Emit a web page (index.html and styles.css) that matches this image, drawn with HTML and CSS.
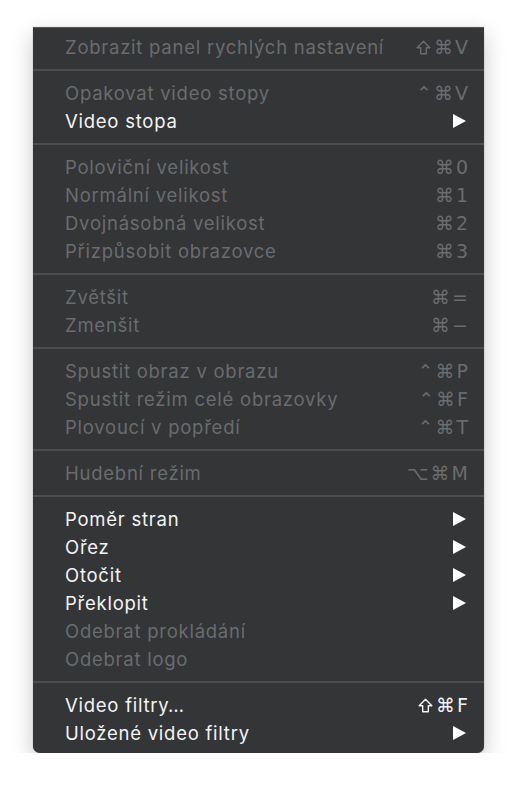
FILE: index.html
```html
<!DOCTYPE html>
<html>
<head>
<meta charset="utf-8">
<link rel="stylesheet" href="styles.css">
</head>
<body>
<div class="page">
  <div class="menu">
    <div class="item dis"><span class="label">Zobrazit panel rychlých nastavení</span><span class="key"><svg class="shift" viewBox="0 0 15 15"><path d="M7.5 1.2 L13.8 7.8 H10.3 V13.8 H4.7 V7.8 H1.2 Z"/></svg>⌘V</span></div>
    <div class="sep"></div>
    <div class="item dis"><span class="label">Opakovat video stopy</span><span class="key">⌃⌘V</span></div>
    <div class="item"><span class="label">Video stopa</span><span class="arrow"></span></div>
    <div class="sep"></div>
    <div class="item dis"><span class="label">Poloviční velikost</span><span class="key">⌘0</span></div>
    <div class="item dis"><span class="label">Normální velikost</span><span class="key">⌘1</span></div>
    <div class="item dis"><span class="label">Dvojnásobná velikost</span><span class="key">⌘2</span></div>
    <div class="item dis"><span class="label">Přizpůsobit obrazovce</span><span class="key">⌘3</span></div>
    <div class="sep"></div>
    <div class="item dis"><span class="label">Zvětšit</span><span class="key">⌘=</span></div>
    <div class="item dis"><span class="label">Zmenšit</span><span class="key">⌘−</span></div>
    <div class="sep"></div>
    <div class="item dis"><span class="label">Spustit obraz v obrazu</span><span class="key">⌃⌘P</span></div>
    <div class="item dis"><span class="label">Spustit režim celé obrazovky</span><span class="key">⌃⌘F</span></div>
    <div class="item dis"><span class="label">Plovoucí v popředí</span><span class="key">⌃⌘T</span></div>
    <div class="sep"></div>
    <div class="item dis"><span class="label">Hudební režim</span><span class="key">⌥⌘M</span></div>
    <div class="sep"></div>
    <div class="item"><span class="label">Poměr stran</span><span class="arrow"></span></div>
    <div class="item"><span class="label">Ořez</span><span class="arrow"></span></div>
    <div class="item"><span class="label">Otočit</span><span class="arrow"></span></div>
    <div class="item"><span class="label">Překlopit</span><span class="arrow"></span></div>
    <div class="item dis"><span class="label">Odebrat prokládání</span></div>
    <div class="item dis"><span class="label">Odebrat logo</span></div>
    <div class="sep"></div>
    <div class="item"><span class="label">Video filtry…</span><span class="key"><svg class="shift" viewBox="0 0 15 15"><path d="M7.5 1.2 L13.8 7.8 H10.3 V13.8 H4.7 V7.8 H1.2 Z"/></svg>⌘F</span></div>
    <div class="item"><span class="label">Uložené video filtry</span><span class="arrow"></span></div>
  </div>
</div>
</body>
</html>
```

FILE: styles.css
```css
html, body {
  margin: 0;
  padding: 0;
  background: #ffffff;
}
.page {
  padding: 27px 0 0 33px;
}
.menu {
  width: 451px;
  box-sizing: border-box;
  background: #333537;
  border-top: 1px solid #56585a;
  border-radius: 0 0 7px 7px;
  padding: 5px 0 6px;
  box-shadow: 0 8px 22px rgba(0, 0, 0, 0.22), 0 0 1px rgba(0, 0, 0, 0.5);
  font-family: Inter, "Liberation Sans", Arial, sans-serif;
  font-size: 18.5px;
  letter-spacing: 0.75px;
}
.item {
  height: 28px;
  display: flex;
  align-items: center;
  justify-content: space-between;
  padding: 0 16px 0 32px;
  color: #f4f4f4;
}
.item.dis {
  color: #6a6c6e;
}
.label {
  white-space: nowrap;
}
.key {
  display: flex;
  align-items: center;
  font-family: "DejaVu Sans", "Liberation Sans", sans-serif;
  font-size: 19px;
  letter-spacing: 2px;
  margin-right: -2px;
}
.shift {
  width: 15px;
  height: 15px;
  margin-right: 3px;
  fill: none;
  stroke: currentColor;
  stroke-width: 1.4;
  stroke-linejoin: round;
}
.arrow {
  width: 0;
  height: 0;
  border-top: 7px solid transparent;
  border-bottom: 7px solid transparent;
  border-left: 13px solid #ffffff;
  margin-right: 2px;
}
.sep {
  height: 18px;
  display: flex;
  align-items: center;
}
.sep::before {
  content: "";
  display: block;
  width: 100%;
  height: 2px;
  background: #4b4d4f;
}
```
